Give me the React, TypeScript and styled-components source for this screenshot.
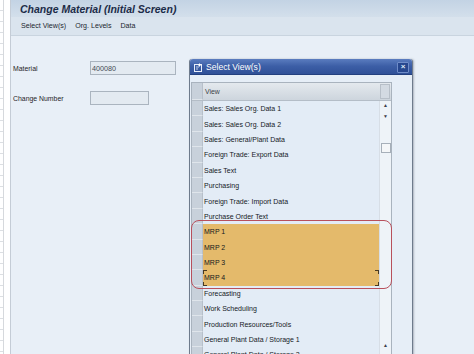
import React from 'react'
import styled, { createGlobalStyle } from 'styled-components'

const GlobalStyle = createGlobalStyle`
	html, body {
		margin: 0;
		padding: 0;
		background: #ffffff;
	}
	body {
		font-family: 'Liberation Sans', Arial, sans-serif;
	}
`

const views = [
	'Sales: Sales Org. Data 1',
	'Sales: Sales Org. Data 2',
	'Sales: General/Plant Data',
	'Foreign Trade: Export Data',
	'Sales Text',
	'Purchasing',
	'Foreign Trade: Import Data',
	'Purchase Order Text',
	'MRP 1',
	'MRP 2',
	'MRP 3',
	'MRP 4',
	'Forecasting',
	'Work Scheduling',
	'Production Resources/Tools',
	'General Plant Data / Storage 1',
	'General Plant Data / Storage 2',
]

const highlighted = ['MRP 1', 'MRP 2', 'MRP 3', 'MRP 4']

const Screen = styled.div`
	display: flex;
	width: 474px;
	height: 354px;
	overflow: hidden;
`

const LeftStrip = styled.div`
	width: 10px;
	flex-shrink: 0;
	background:
		linear-gradient(to right, transparent 3px, #d6d9dd 3px, #d6d9dd 4px, transparent 4px),
		repeating-linear-gradient(to bottom, #ffffff 0, #ffffff 10px, #dcdfe3 10px, #dcdfe3 11px);
	background-size: 100% 100%, 3px 100%;
	background-repeat: no-repeat;
	background-color: #ffffff;
`

const Window = styled.div`
	flex: 1;
	display: flex;
	flex-direction: column;
	border-left: 1px solid #c4ccd6;
	background: #e8eff7;
`

const TitleBar = styled.div`
	height: 17px;
	display: flex;
	align-items: center;
	padding-left: 9px;
	background: linear-gradient(to bottom, #c3d3e4, #d3dfeb);
`

const Title = styled.h1`
	margin: 0;
	font-size: 10.5px;
	font-weight: bold;
	font-style: italic;
	color: #1c2c48;
`

const MenuBar = styled.div`
	height: 18px;
	display: flex;
	align-items: center;
	gap: 9px;
	padding-left: 10px;
	background: #dae4ee;
	border-bottom: 1px solid #c9d4df;
`

const MenuItem = styled.span`
	font-size: 7.1px;
	color: #22272e;
`

const Body = styled.div`
	flex: 1;
	position: relative;
	padding: 25px 0 0 2px;
`

const Form = styled.div`
	display: grid;
	grid-template-columns: 77px auto;
	row-gap: 16px;
	align-items: center;
	justify-items: start;
`

const Label = styled.span`
	font-size: 6.9px;
	color: #1f2328;
`

const Field = styled.div<{ $width: number }>`
	width: ${(p) => p.$width}px;
	height: 14px;
	box-sizing: border-box;
	border: 1px solid #aab4bf;
	background: #e3eaf1;
	font-size: 7.2px;
	color: #444b53;
	display: flex;
	align-items: center;
	padding-left: 1px;
`

const Dialog = styled.div`
	position: absolute;
	left: 178px;
	top: 23px;
	width: 222px;
	height: 320px;
	display: flex;
	flex-direction: column;
	border: 1px solid #6e7b8c;
	border-top: none;
	border-radius: 3px 3px 0 0;
	background: #e6eef7;
	box-shadow: 1px 0 2px rgba(60, 70, 90, 0.35);
`

const DialogTitle = styled.div`
	height: 16px;
	display: flex;
	align-items: center;
	gap: 3px;
	padding: 0 3px 0 4px;
	border-radius: 3px 3px 0 0;
	background: linear-gradient(to bottom, #5a7cbf 0%, #3c5ea6 45%, #2f4f96 100%);
	box-shadow: inset 0 -1px 0 #23407f;
`

const DialogTitleText = styled.span`
	flex: 1;
	font-size: 8.6px;
	color: #ffffff;
`

const CloseButton = styled.div`
	width: 10px;
	height: 9px;
	display: flex;
	align-items: center;
	justify-content: center;
	background: #27478f;
	border: 1px solid #6f8cc8;
	border-radius: 1px;
	color: #dfe7f6;
	font-size: 8px;
	font-weight: bold;
	line-height: 1;
`

const DialogContent = styled.div`
	flex: 1;
	padding: 7px 20px 0 1px;
`

const Table = styled.div`
	position: relative;
	display: flex;
	flex-direction: column;
	border: 1px solid #a9b3be;
	border-bottom: none;
`

const HeaderRow = styled.div`
	display: grid;
	grid-template-columns: 11px 1fr 11px;
	height: 17px;
	background: linear-gradient(to bottom, #e4e9ee, #cdd5dd);
	border-bottom: 1px solid #b4bdc7;
`

const SelectorCell = styled.div`
	background: #c8d1db;
	border-right: 1px solid #b7c0ca;
	border-bottom: 1px solid #dfe5eb;
`

const HeaderText = styled.div`
	display: flex;
	align-items: center;
	padding-left: 2px;
	font-size: 6.9px;
	color: #3a3f46;
`

const HeaderEnd = styled.div`
	margin: 1px 1px 1px 0;
	background: #d3dae2;
	border: 1px solid #b7bfc8;
`

const TableBody = styled.div`
	display: flex;
`

const Rows = styled.div`
	flex: 1;
	display: flex;
	flex-direction: column;
`

const Row = styled.div`
	display: grid;
	grid-template-columns: 11px 1fr;
	height: 15.4px;
	position: relative;
`

const RowText = styled.div<{ $hl: boolean }>`
	display: flex;
	align-items: center;
	padding-left: 1px;
	font-size: 7px;
	color: #15191e;
	white-space: nowrap;
	background: ${(p) => (p.$hl ? '#e4ba6b' : '#e3ecf6')};
`

const Corner = styled.span<{ $pos: string }>`
	position: absolute;
	width: 3px;
	height: 3px;
	border-color: #4a3a20;
	border-style: solid;
	border-width: 0;
	${(p) => (p.$pos.includes('t') ? 'top: 0; border-top-width: 1px;' : 'bottom: 0; border-bottom-width: 1px;')}
	${(p) => (p.$pos.includes('l') ? 'left: 11px; border-left-width: 1px;' : 'right: 0; border-right-width: 1px;')}
`

const ScrollTrack = styled.div`
	width: 11px;
	display: flex;
	flex-direction: column;
	align-items: center;
	background: #eef3f8;
	border-left: 1px solid #d7dee6;
`

const Arrow = styled.span<{ $top: number }>`
	margin-top: ${(p) => p.$top}px;
	font-size: 5px;
	line-height: 5px;
	color: #3b4048;
`

const Thumb = styled.div`
	margin-top: 24px;
	width: 8px;
	height: 8px;
	background: #f4f6f8;
	border: 1px solid #a6afb9;
`

const Annotation = styled.div`
	position: absolute;
	left: -1px;
	top: 137px;
	width: 199px;
	height: 67px;
	border: 1.5px solid #b8505c;
	border-radius: 8px;
	pointer-events: none;
`

const DialogIcon = () => (
	<svg width="9" height="9" viewBox="0 0 9 9">
		<rect x="0.5" y="1.5" width="7" height="7" fill="none" stroke="#e8eefa" strokeWidth="1" />
		<path d="M2 4h3M2 6h2" stroke="#e8eefa" strokeWidth="0.8" />
		<path d="M5.5 0.5v3M4 2h3" stroke="#ffffff" strokeWidth="1" />
	</svg>
)

const App: React.FunctionComponent = () => {
	return (
		<>
			<GlobalStyle />
			<Screen>
				<LeftStrip />
				<Window>
					<TitleBar>
						<Title>Change Material (Initial Screen)</Title>
					</TitleBar>
					<MenuBar>
						<MenuItem>Select View(s)</MenuItem>
						<MenuItem>Org. Levels</MenuItem>
						<MenuItem>Data</MenuItem>
					</MenuBar>
					<Body>
						<Form>
							<Label>Material</Label>
							<Field $width={86}>400080</Field>
							<Label>Change Number</Label>
							<Field $width={59} />
						</Form>
						<Dialog>
							<DialogTitle>
								<DialogIcon />
								<DialogTitleText>Select View(s)</DialogTitleText>
								<CloseButton>×</CloseButton>
							</DialogTitle>
							<DialogContent>
								<Table>
									<HeaderRow>
										<SelectorCell />
										<HeaderText>View</HeaderText>
										<HeaderEnd />
									</HeaderRow>
									<TableBody>
										<Rows>
											{views.map((v) => (
												<Row key={v}>
													<SelectorCell />
													<RowText $hl={highlighted.includes(v)}>{v}</RowText>
													{v === 'MRP 4' && (
														<>
															<Corner $pos="tl" />
															<Corner $pos="tr" />
															<Corner $pos="bl" />
															<Corner $pos="br" />
														</>
													)}
												</Row>
											))}
										</Rows>
										<ScrollTrack>
											<Arrow $top={2}>▲</Arrow>
											<Arrow $top={6}>▼</Arrow>
											<Thumb />
											<Arrow $top={190}>▲</Arrow>
										</ScrollTrack>
									</TableBody>
									<Annotation />
								</Table>
							</DialogContent>
						</Dialog>
					</Body>
				</Window>
			</Screen>
		</>
	)
}

export default App
